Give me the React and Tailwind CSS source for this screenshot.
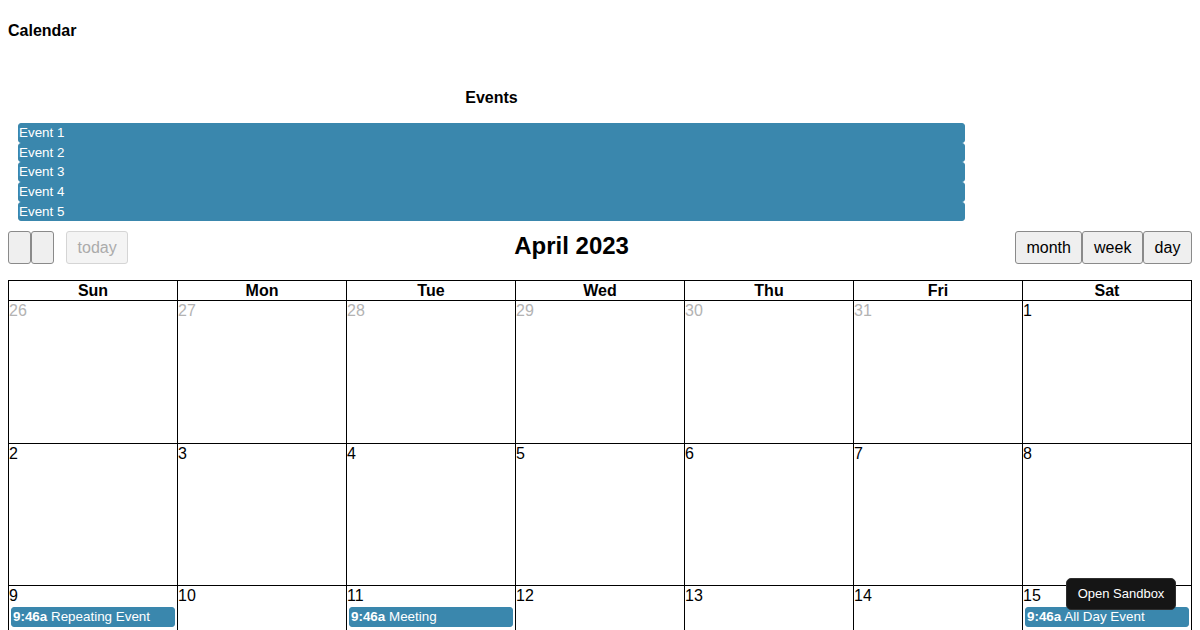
import React from "react";

const days = ["Sun", "Mon", "Tue", "Wed", "Thu", "Fri", "Sat"];
const weeks = [
  [
    { d: 26, o: true },
    { d: 27, o: true },
    { d: 28, o: true },
    { d: 29, o: true },
    { d: 30, o: true },
    { d: 31, o: true },
    { d: 1 },
  ],
  [2, 3, 4, 5, 6, 7, 8].map((d) => ({ d })),
  [
    { d: 9, ev: "Repeating Event" },
    { d: 10 },
    { d: 11, ev: "Meeting" },
    { d: 12 },
    { d: 13 },
    { d: 14 },
    { d: 15, ev: "All Day Event" },
  ],
];

function Btn({ children, className = "" }) {
  return (
    <button
      className={
        "h-[33px] px-[10.6px] border border-[#8a8a8a] rounded-[3px] bg-[#efefef] text-[16px] text-black leading-none " +
        className
      }
    >
      {children}
    </button>
  );
}

export default function App() {
  return (
    <div className="p-2 font-['Liberation_Sans',Arial,sans-serif] text-black bg-white h-[630px] overflow-hidden">
      <h4 className="text-[16px] font-bold mt-[14px] leading-[18px]">Calendar</h4>

      <div className="ml-[10px] w-[947px]">
        <h4 className="text-[16px] font-bold mt-[49px] leading-[18px] text-center">Events</h4>
        <div className="mt-[16px] flex flex-col">
          {[1, 2, 3, 4, 5].map((n) => (
            <div
              key={n}
              className="bg-[#3a87ad] border border-[#3a87ad] rounded-[3px] text-white text-[13.4px] leading-[1.32]"
            >
              Event {n}
            </div>
          ))}
        </div>
      </div>

      <div className="mt-[10px] flex items-start h-[33px]">
        <div className="flex items-start">
          <div className="flex">
            <button className="h-[33px] w-[23px] border border-[#8a8a8a] rounded-[3px] bg-[#efefef]"></button>
            <button className="h-[33px] w-[23px] border border-[#8a8a8a] rounded-[3px] bg-[#efefef]"></button>
          </div>
          <button className="ml-[12px] h-[33px] px-[10.6px] border border-[#d5d5d5] rounded-[3px] bg-[#f4f4f4] text-[16px] text-[#ababab] leading-none">
            today
          </button>
        </div>
        <div className="flex-1 text-center">
          <h2 className="text-[24px] font-bold leading-[28px] mt-[1px]">April 2023</h2>
        </div>
        <div className="flex">
          <Btn>month</Btn>
          <Btn>week</Btn>
          <Btn>day</Btn>
        </div>
      </div>

      <table className="mt-[16px] w-[1184px] table-fixed border-collapse">
        <thead>
          <tr>
            {days.map((d) => (
              <th key={d} className="border border-black text-[16px] font-bold leading-[18px] h-[20px] p-0 text-center">
                {d}
              </th>
            ))}
          </tr>
        </thead>
        <tbody>
          {weeks.map((w, i) => (
            <tr key={i}>
              {w.map((c) => (
                <td
                  key={c.d + "-" + i}
                  className={"border border-black align-top p-0 " + (i === 0 ? "h-[143px]" : "h-[142px]")}
                >
                  <div className={"text-[16px] leading-[18px] mt-[1px] " + (c.o ? "text-[#b3b3b3]" : "text-black")}>
                    {c.d}
                  </div>
                  {c.ev && (
                    <div className="mt-[2px] mx-[2px] bg-[#3a87ad] border border-[#3a87ad] rounded-[3px] text-white text-[13.4px] leading-[1.32] px-[1px] whitespace-nowrap overflow-hidden">
                      <span className="font-bold">9:46a</span> {c.ev}
                    </div>
                  )}
                </td>
              ))}
            </tr>
          ))}
        </tbody>
      </table>

      <div className="fixed right-[24px] bottom-[20px] w-[110px] h-[32px] flex items-center justify-center rounded-[5px] bg-[#151515] border border-[#2e2e2e] text-white text-[13px] font-['Liberation_Sans',Arial,sans-serif]">
        Open Sandbox
      </div>
    </div>
  );
}
